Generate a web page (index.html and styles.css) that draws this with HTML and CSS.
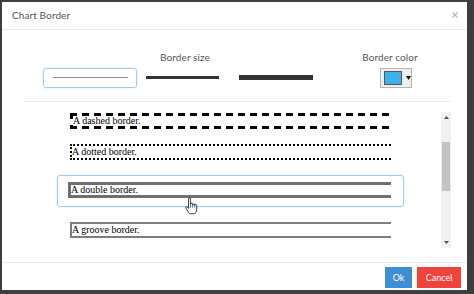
FILE: index.html
```html
<!DOCTYPE html>
<html>
<head>
<meta charset="utf-8">
<link rel="stylesheet" href="styles.css">
</head>
<body>
<div class="dialog">
  <div class="header">
    <span class="title">Chart Border</span>
    <svg class="close" width="6" height="6" viewBox="0 0 6 6"><path d="M0.5 0.5L5.5 5.5M5.5 0.5L0.5 5.5" stroke="#b5b5b5" stroke-width="1.1"/></svg>
  </div>
  <div class="settings">
    <div class="col">
      <div class="opt is-selected"><span class="ln ln1"></span></div>
    </div>
    <div class="col col2">
      <div class="label">Border size</div>
      <div class="opt-plain"><span class="ln ln2"></span></div>
    </div>
    <div class="col col3">
      <div class="opt-plain"><span class="ln ln3"></span></div>
    </div>
    <div class="col col4">
      <div class="label">Border color</div>
      <div class="picker">
        <span class="swatch"></span>
        <svg class="caret" width="5" height="4" viewBox="0 0 5 4"><path d="M0 0H5L2.5 4Z" fill="#111"/></svg>
      </div>
    </div>
  </div>
  <div class="list">
    <div class="items">
      <div class="row">
        <div class="preview"><div class="sample s-dashed">A dashed border.</div></div>
      </div>
      <div class="row row-b">
        <div class="preview"><div class="sample s-dotted">A dotted border.</div></div>
      </div>
      <div class="row row-c is-selected">
        <div class="preview preview-wide"><div class="sample s-double">A double border.</div></div>
        <svg class="cursor" width="14" height="18" viewBox="0 0 17 22"><path d="M5.5 11V2.5a1.25 1.25 0 0 1 2.5 0V9a1.25 1.25 0 0 1 2.5 0v0.6a1.25 1.25 0 0 1 2.5 0v0.8a1.25 1.25 0 0 1 2.5 0V15c0 3.2-1.6 5.5-4.3 5.5H8.600c-1.5 0-2.6-.8-3.4-2L2.2 13.5c-.7-1.1.7-2.2 1.7-1.3L5.5 13.8z" fill="#fff" stroke="#111" stroke-width="1" stroke-linejoin="round"/><path d="M8 9v4M10.5 9.6v3.4M13 10.4v2.6" stroke="#111" stroke-width="0.8"/></svg>
      </div>
      <div class="row row-d">
        <div class="preview"><div class="sample s-groove">A groove border.</div></div>
      </div>
    </div>
    <div class="scrollbar">
      <svg class="arrow" width="5" height="3" viewBox="0 0 5 3"><path d="M0 3H5L2.5 0Z" fill="#505050"/></svg>
      <div class="thumb"></div>
      <div class="track-rest"></div>
      <svg class="arrow" width="5" height="3" viewBox="0 0 5 3"><path d="M0 0H5L2.5 3Z" fill="#505050"/></svg>
    </div>
  </div>
  <div class="footer">
    <button class="btn btn-ok">Ok</button>
    <button class="btn btn-cancel">Cancel</button>
  </div>
</div>
</body>
</html>
```
FILE: styles.css
```css
* { box-sizing: border-box; }
html, body { margin: 0; padding: 0; }
body {
  width: 474px;
  height: 294px;
  background: #3e3e3e;
  padding: 2px 0 0 2px;
  font-family: Lato, "Open Sans", sans-serif;
  overflow: hidden;
}
.dialog {
  width: 465px;
  height: 288px;
  background: #fff;
  display: flex;
  flex-direction: column;
}
.header {
  height: 28px;
  flex: none;
  border-bottom: 1px solid #ececec;
  display: flex;
  align-items: center;
  justify-content: space-between;
  padding: 0 9px 2px 10px;
}
.title { font-size: 10px; color: #555; letter-spacing: 0.1px; }
.close { display: block; }

.settings {
  flex: none;
  margin: 0 17px 0 22px;
  border-bottom: 1px solid #ececec;
  padding: 21px 34px 13px 19px;
  display: flex;
  align-items: flex-end;
  height: 72px;
}
.col { display: flex; flex-direction: column; align-items: center; gap: 4px; }
.col2 { margin-left: 9px; }
.col3 { margin-left: 20px; }
.col4 { margin-left: auto; width: 52px; }
.label { font-size: 10px; line-height: 13px; color: #555; white-space: nowrap; letter-spacing: 0.1px; }
.col2 .label { margin-left: 5px; }
.opt {
  width: 94px;
  height: 20px;
  border: 1px solid #ccc;
  border-radius: 3px;
  display: flex;
  align-items: center;
  justify-content: center;
}
.opt-plain { height: 20px; display: flex; align-items: center; }
.ln { display: block; }
.ln1 { width: 75px; height: 1px; background: #8a8a8a; margin-top: -1px; }
.ln2 { width: 73px; height: 3px; background: #333; margin-top: -2px; }
.ln3 { width: 74px; height: 5px; background: #333; margin-top: -2px; }
.picker {
  align-self: flex-end;
  margin-right: 4px;
  width: 32px;
  height: 20px;
  border: 1px solid #b5b5b5;
  background: #efefef;
  display: flex;
  align-items: center;
  padding: 0 0 0 3px;
  gap: 4px;
}
.swatch {
  width: 18px;
  height: 14px;
  border: 1px solid #555;
  background: #3cb1ec;
}
.caret { display: block; }

.list {
  flex: none;
  height: 160px;
  display: flex;
  padding: 4px 0 0 55px;
}
.items { width: 347px; display: flex; flex-direction: column; }
.row {
  position: relative;
  height: 32px;
  border: 1px solid transparent;
  border-radius: 3px;
  padding: 6px 12px 0;
}
.row-b { margin-top: -1px; }
.row-c { margin-top: 6px; }
.row-d { margin-top: 8px; }
.opt.is-selected,
.row.is-selected {
  border: 1px solid #a3cbef;
  box-shadow: 0 0 2px rgba(120, 175, 225, 0.4);
}
.preview { width: 321px; overflow: hidden; }
.preview-wide { width: 323px; margin-left: -2px; }
.sample {
  width: 360px;
  height: 16px;
  font-family: "Liberation Serif", "Times New Roman", serif;
  font-size: 10px;
  line-height: 10px;
  color: #000;
  white-space: nowrap;
}
.s-dashed {
  padding: 3px;
  background:
    repeating-linear-gradient(90deg, #000 0 7px, transparent 7px 12px) left top / 100% 3px no-repeat,
    repeating-linear-gradient(90deg, #000 0 7px, transparent 7px 12px) left bottom / 100% 3px no-repeat,
    linear-gradient(180deg, #000 0 6px, transparent 6px 12px, #000 12px) left top / 3px 100% no-repeat;
}
.s-dotted { border: 2px dotted #000; line-height: 12px; }
.s-double { border: 3px solid #6f6f6f; }
.s-groove { border: 2px solid #7d7d7d; line-height: 12px; }
.cursor { position: absolute; left: 126px; top: 21px; }

.scrollbar {
  margin: 6px 0 0 37px;
  width: 10px;
  height: 136px;
  background: #f0f0f0;
  display: flex;
  flex-direction: column;
  align-items: center;
  padding: 4px 0 4px;
}
.arrow { display: block; flex: none; }
.thumb {
  margin-top: 23px;
  width: 8px;
  height: 49px;
  background: #c2c2c2;
  flex: none;
}
.track-rest { flex: 1; }

.footer {
  flex: 1;
  border-top: 1px solid #ececec;
  display: flex;
  justify-content: flex-end;
  align-items: flex-start;
  gap: 5px;
  padding: 4px 6px 0 0;
}
.btn {
  height: 21px;
  border: 0;
  border-radius: 0;
  color: #fff;
  font-family: Lato, "Open Sans", sans-serif;
  font-size: 9px;
  padding: 0;
  margin: 0;
}
.btn-ok { width: 27px; background: #3c8fd5; }
.btn-cancel { width: 44px; background: #f1423b; }
```
